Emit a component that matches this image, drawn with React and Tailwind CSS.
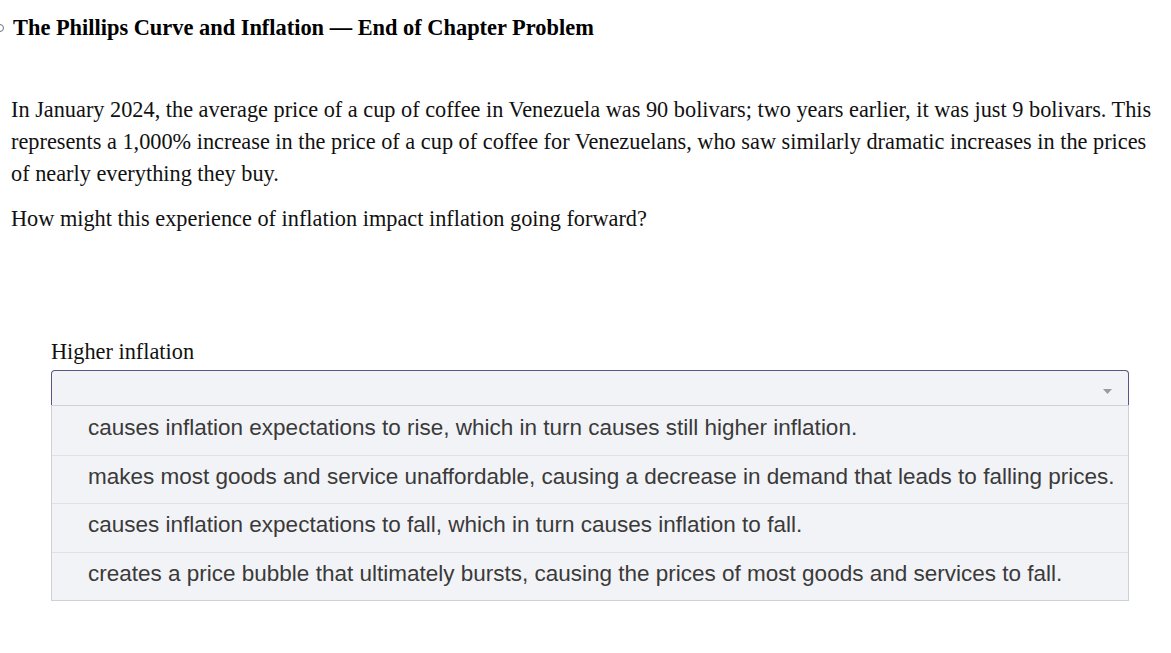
import React from "react";

const options = [
  "causes inflation expectations to rise, which in turn causes still higher inflation.",
  "makes most goods and service unaffordable, causing a decrease in demand that leads to falling prices.",
  "causes inflation expectations to fall, which in turn causes inflation to fall.",
  "creates a price bubble that ultimately bursts, causing the prices of most goods and services to fall.",
];

const App = () => {
  return (
    <div className="w-[1171px] h-[653px] bg-white overflow-hidden font-['Liberation_Serif',serif] text-black">
      {/* heading */}
      <div className="flex items-center h-[56px] pl-[13px] relative">
        <span className="absolute left-[-4px] top-[24px] w-[8px] h-[8px] rounded-full border border-gray-500" />
        <h2 className="text-[22.4px] font-bold leading-none">
          The Phillips Curve and Inflation — End of Chapter Problem
        </h2>
      </div>

      <div className="px-[11px] pt-[38px]">
        <p className="text-[22.3px] leading-[32px] text-[#111]">
          In January 2024, the average price of a cup of coffee in Venezuela was 90 bolivars; two years earlier, it was just 9
          bolivars. This represents a 1,000% increase in the price of a cup of coffee for Venezuelans, who saw similarly
          dramatic increases in the prices of nearly everything they buy.
        </p>
        <p className="text-[22.3px] leading-[32px] text-[#111] mt-[13px]">
          How might this experience of inflation impact inflation going forward?
        </p>
      </div>

      {/* question */}
      <div className="pl-[51px] pr-[42px] pt-[101px]">
        <div className="text-[22.3px] leading-[32px] text-[#111]">Higher inflation</div>
        <div className="mt-[2px] h-[35px] bg-[#f2f3f6] border border-b-0 border-[#5a5489] rounded-t-[4px] flex items-center justify-end pr-[16px]">
          <svg width="9" height="5" viewBox="0 0 9 5" className="mt-[6px]">
            <path d="M0 0 L9 0 L4.5 5 Z" fill="#9a9aa2" />
          </svg>
        </div>
        <ul className="border border-[#d0d1d6] bg-[#f2f3f6] font-['Liberation_Sans',Arial,sans-serif]">
          {options.map((opt, i) => (
            <li
              key={i}
              className={`h-[48.5px] flex items-center pl-[36px] pb-[5px] text-[22.5px] text-[#3a3a3a] ${
                i > 0 ? "border-t border-[#e0e1e6]" : ""
              }`}
            >
              {opt}
            </li>
          ))}
        </ul>
      </div>
    </div>
  );
};

export default App;
